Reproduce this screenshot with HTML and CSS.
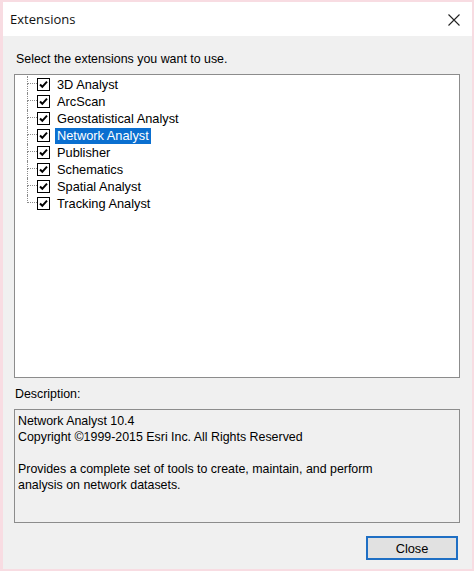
FILE: index.html
```html
<!DOCTYPE html>
<html>
<head>
<meta charset="utf-8">
<title>Extensions</title>
<link rel="stylesheet" href="styles.css">
</head>
<body>
<div class="window">
  <div class="titlebar">
    <span class="title">Extensions</span>
    <svg class="close-x" width="12" height="12" viewBox="0 0 12 12"><path d="M0.5 0.5 L11.5 11.5 M11.5 0.5 L0.5 11.5" stroke="#222" stroke-width="1.1" fill="none"/></svg>
  </div>
  <div class="content">
    <div class="prompt">Select the extensions you want to use.</div>
    <div class="tree">
      <ul class="items">
        <li class="item"><span class="conn"></span><span class="cb"><svg width="11" height="11" viewBox="0 0 11 11"><path d="M2 5.5 L4.3 7.8 L9 2.6" stroke="#000" stroke-width="2" fill="none"/></svg></span><span class="label">3D Analyst</span></li>
        <li class="item"><span class="conn"></span><span class="cb"><svg width="11" height="11" viewBox="0 0 11 11"><path d="M2 5.5 L4.3 7.8 L9 2.6" stroke="#000" stroke-width="2" fill="none"/></svg></span><span class="label">ArcScan</span></li>
        <li class="item"><span class="conn"></span><span class="cb"><svg width="11" height="11" viewBox="0 0 11 11"><path d="M2 5.5 L4.3 7.8 L9 2.6" stroke="#000" stroke-width="2" fill="none"/></svg></span><span class="label">Geostatistical Analyst</span></li>
        <li class="item"><span class="conn"></span><span class="cb"><svg width="11" height="11" viewBox="0 0 11 11"><path d="M2 5.5 L4.3 7.8 L9 2.6" stroke="#000" stroke-width="2" fill="none"/></svg></span><span class="label selected">Network Analyst</span></li>
        <li class="item"><span class="conn"></span><span class="cb"><svg width="11" height="11" viewBox="0 0 11 11"><path d="M2 5.5 L4.3 7.8 L9 2.6" stroke="#000" stroke-width="2" fill="none"/></svg></span><span class="label">Publisher</span></li>
        <li class="item"><span class="conn"></span><span class="cb"><svg width="11" height="11" viewBox="0 0 11 11"><path d="M2 5.5 L4.3 7.8 L9 2.6" stroke="#000" stroke-width="2" fill="none"/></svg></span><span class="label">Schematics</span></li>
        <li class="item"><span class="conn"></span><span class="cb"><svg width="11" height="11" viewBox="0 0 11 11"><path d="M2 5.5 L4.3 7.8 L9 2.6" stroke="#000" stroke-width="2" fill="none"/></svg></span><span class="label">Spatial Analyst</span></li>
        <li class="item last"><span class="conn"></span><span class="cb"><svg width="11" height="11" viewBox="0 0 11 11"><path d="M2 5.5 L4.3 7.8 L9 2.6" stroke="#000" stroke-width="2" fill="none"/></svg></span><span class="label">Tracking Analyst</span></li>
      </ul>
    </div>
    <div class="desc-label">Description:</div>
    <div class="desc-box">
      <div>Network Analyst 10.4</div>
      <div>Copyright ©1999-2015 Esri Inc. All Rights Reserved</div>
      <div class="blank">&nbsp;</div>
      <div>Provides a complete set of tools to create, maintain, and perform</div>
      <div>analysis on network datasets.</div>
    </div>
    <div class="footer">
      <button class="btn">Close</button>
    </div>
  </div>
</div>
</body>
</html>
```

FILE: styles.css
```css
html, body {
  margin: 0;
  padding: 0;
}
body {
  width: 474px;
  height: 571px;
  background: #f8dce2;
  font-family: "Liberation Sans", Arial, sans-serif;
  font-size: 12.4px;
  color: #000;
}
.window {
  box-sizing: border-box;
  width: 474px;
  height: 571px;
  border: 2px solid #f8dce2;
  border-left-width: 3px;
  display: flex;
  flex-direction: column;
  background: #f0f0f0;
}
.titlebar {
  height: 34px;
  background: #fff;
  display: flex;
  align-items: center;
  justify-content: space-between;
  padding: 0 12px 0 7px;
  flex: none;
}
.title {
  font-family: "Open Sans", "Noto Sans", sans-serif;
  font-size: 13px;
  color: #111;
  padding-bottom: 1px;
}
.close-x {
  display: block;
  margin-top: 1px;
}
.content {
  flex: 1;
  display: flex;
  flex-direction: column;
  padding: 16px 12px 9px 11px;
}
.prompt {
  line-height: 15px;
  height: 15px;
  padding-left: 2px;
}
.tree {
  margin-top: 7px;
  height: 304px;
  box-sizing: border-box;
  border: 1px solid #8c8c8c;
  background: #fff;
  padding: 1px 0 0 12px;
}
.items {
  list-style: none;
  margin: 0;
  padding: 0;
}
.item {
  height: 17px;
  display: flex;
  align-items: center;
  font-size: 12.8px;
}
.conn {
  width: 10px;
  align-self: stretch;
  display: grid;
  grid-template-rows: 8px 9px;
  flex: none;
}
.conn::before {
  content: "";
  border-left: 1px dotted #8a8a8a;
  border-bottom: 1px dotted #8a8a8a;
}
.conn::after {
  content: "";
  border-left: 1px dotted #8a8a8a;
}
.item.last .conn::after {
  border-left: none;
}
.cb {
  width: 11px;
  height: 11px;
  border: 1px solid #000;
  background: #fff;
  display: flex;
  align-items: center;
  justify-content: center;
  flex: none;
}
.cb svg {
  display: block;
}
.label {
  margin-left: 5px;
  padding: 0 2px;
  line-height: 16px;
  height: 16px;
  white-space: nowrap;
}
.label.selected {
  background: #0a6fd0;
  color: #fff;
}
.desc-label {
  margin-top: 9px;
  line-height: 15px;
  height: 15px;
  padding-left: 1px;
}
.desc-box {
  margin-top: 7px;
  height: 114px;
  box-sizing: border-box;
  border: 1px solid #8c8c8c;
  background: #f0f0f0;
  padding: 3px 3px;
  line-height: 16px;
}
.footer {
  margin-top: 13px;
  display: flex;
  justify-content: flex-end;
  padding-right: 2px;
}
.btn {
  width: 92px;
  height: 24px;
  box-sizing: border-box;
  border: 2px solid #1f6fc4;
  background: #e1e1e1;
  font-family: "Liberation Sans", Arial, sans-serif;
  font-size: 12.8px;
  color: #000;
  padding: 0;
}
```
